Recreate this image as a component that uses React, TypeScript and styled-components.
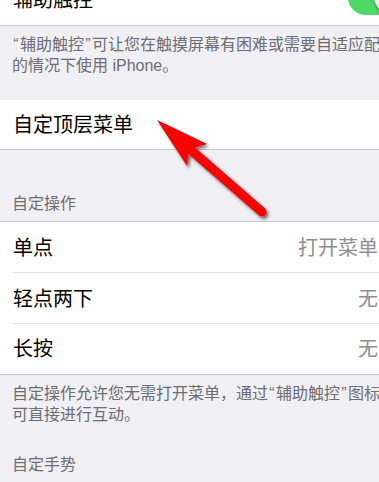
import React from "react";
import styled, { createGlobalStyle } from "styled-components";

const Global = createGlobalStyle`
  html, body { margin: 0; padding: 0; background: #efeff4; overflow: hidden; }
  body { font-family: "Liberation Sans", "Noto Sans CJK SC", sans-serif; }
`;

const Page = styled.div`
  position: relative;
  width: 420px;
  height: 482px;
  overflow: hidden;
  background: #efeff4;
`;

const Cell = styled.div<{ $pull?: number; $h?: number; $right?: number }>`
  box-sizing: border-box;
  display: flex;
  align-items: center;
  justify-content: space-between;
  height: ${(p) => p.$h ?? 50}px;
  margin-top: ${(p) => -(p.$pull ?? 0)}px;
  padding: 0 ${(p) => p.$right ?? 42}px 0 13px;
  background: #fff;
  border-bottom: 1px solid #c8c7cc;
`;

const Group = styled.div`
  background: #fff;
  border-top: 1px solid #c8c7cc;
  border-bottom: 1px solid #c8c7cc;
`;

const Row = styled.div<{ $last?: boolean }>`
  position: relative;
  box-sizing: border-box;
  display: flex;
  align-items: center;
  justify-content: space-between;
  height: ${(p) => (p.$last ? 50 : 51)}px;
  padding: 0 42px 0 13px;
  &::after {
    content: "";
    display: ${(p) => (p.$last ? "none" : "block")};
    position: absolute;
    left: 13px;
    right: 0;
    bottom: 0;
    height: 1px;
    background: #e3e3e6;
  }
`;

const Label = styled.span`
  font-size: 20px;
  color: #000;
  line-height: 24px;
`;

const Value = styled.span`
  font-size: 20px;
  color: #8e8e93;
  line-height: 24px;
`;

const Footer = styled.div<{ $bottom: number }>`
  padding: 8px 0 ${(p) => p.$bottom}px 12px;
  font-size: 16px;
  line-height: 21px;
  color: #6d6d72;
  white-space: nowrap;
`;

const Quote = styled.span`
  display: inline-block;
  width: 8px;
  text-align: center;
`;

const Header = styled.div<{ $top: number }>`
  padding: ${(p) => p.$top}px 0 7px 12px;
  font-size: 16px;
  line-height: 20px;
  color: #6d6d72;
`;

const Switch = styled.div`
  position: relative;
  width: 60px;
  height: 36px;
  border-radius: 18px;
  background: #4cd964;
  flex: none;
  margin-top: -6px;
  &::after {
    content: "";
    position: absolute;
    right: 2px;
    top: 2px;
    width: 32px;
    height: 32px;
    border-radius: 50%;
    background: #fff;
    box-shadow: 0 2px 3px rgba(0, 0, 0, 0.25);
  }
`;

const Overlay = styled.svg`
  position: absolute;
  left: 0;
  top: 0;
  pointer-events: none;
`;

function Arrow() {
  return (
    <Overlay width="379" height="482" viewBox="0 0 379 482">
      <defs>
        <filter id="sh" x="-20%" y="-20%" width="140%" height="140%">
          <feDropShadow dx="2" dy="2.5" stdDeviation="1.6" floodColor="#000" floodOpacity="0.55" />
        </filter>
      </defs>
      <g filter="url(#sh)" fill="#ff0000">
        <line x1="184" y1="144" x2="262" y2="212" stroke="#ff0000" strokeWidth="9" strokeLinecap="round" />
        <polygon points="157,120 207,144 189,149 187,166" />
      </g>
    </Overlay>
  );
}

export default function App() {
  return (
    <>
      <Global />
      <Page>
        <Cell $pull={25} $h={51} $right={12}>
          <Label>辅助触控</Label>
          <Switch />
        </Cell>
        <Footer $bottom={24}>
          <Quote>“</Quote>辅助触控<Quote>”</Quote>可让您在触摸屏幕有困难或需要自适应配件
          <br />
          的情况下使用 iPhone。
        </Footer>
        <Cell>
          <Label>自定顶层菜单</Label>
        </Cell>
        <Header $top={44}>自定操作</Header>
        <Group>
          <Row>
            <Label>单点</Label>
            <Value>打开菜单</Value>
          </Row>
          <Row>
            <Label>轻点两下</Label>
            <Value>无</Value>
          </Row>
          <Row $last>
            <Label>长按</Label>
            <Value>无</Value>
          </Row>
        </Group>
        <Footer $bottom={24}>
          自定操作允许您无需打开菜单，通过<Quote>“</Quote>辅助触控<Quote>”</Quote>图标
          <br />
          可直接进行互动。
        </Footer>
        <Header $top={6}>自定手势</Header>
        <Group />
        <Arrow />
      </Page>
    </>
  );
}
